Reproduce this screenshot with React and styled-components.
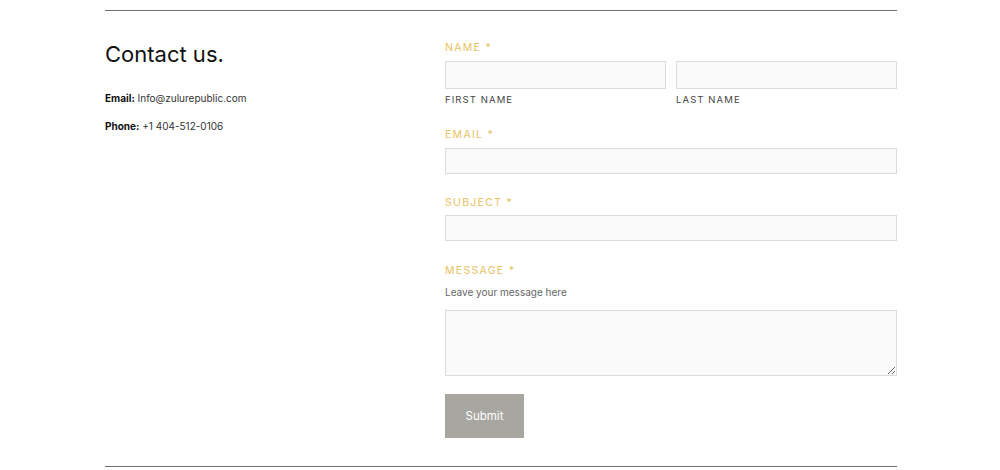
import styled, { createGlobalStyle } from "styled-components";

const GlobalStyle = createGlobalStyle`
  body {
    margin: 0;
    background: #fff;
    font-family: Inter, "Liberation Sans", sans-serif;
  }
`;

const Page = styled.section`
  width: 792px;
  margin: 0 auto 0 105px;
  padding-top: 10px;
`;

const Rule = styled.hr`
  margin: 0;
  border: none;
  border-top: 1px solid #6f6f6f;
`;

const Columns = styled.div`
  display: flex;
`;

const Info = styled.div`
  width: 340px;
  padding-top: 28px;
`;

const Heading = styled.h1`
  margin: 0;
  font-size: 22px;
  font-weight: 400;
  line-height: 30px;
  color: #111;
`;

const InfoLine = styled.p`
  margin: ${(p) => p.$top}px 0 0;
  font-size: 10px;
  line-height: 14px;
  color: #333;

  strong {
    font-weight: 700;
    color: #111;
  }
`;

const Form = styled.form`
  flex: 1;
  display: flex;
  flex-direction: column;
  padding-top: 29px;
`;

const Label = styled.label`
  margin-top: ${(p) => p.$top || 0}px;
  font-size: 10.5px;
  line-height: 16px;
  letter-spacing: 1.3px;
  color: #e6c25e;
  text-transform: uppercase;
`;

const Row = styled.div`
  display: grid;
  grid-template-columns: 1fr 1fr;
  gap: 10px;
  margin-top: 5px;
`;

const Field = styled.div`
  display: flex;
  flex-direction: column;
`;

const Input = styled.input`
  box-sizing: border-box;
  width: 100%;
  height: ${(p) => p.$h || 26}px;
  margin-top: ${(p) => p.$top || 0}px;
  border: 1px solid #dcdcdc;
  background: #fafafa;
  padding: 0 10px;
  font: inherit;
  outline: none;
`;

const SubLabel = styled.span`
  margin-top: 5px;
  font-size: 9.5px;
  line-height: 12px;
  letter-spacing: 1.1px;
  color: #444;
`;

const Helper = styled.p`
  margin: 6px 0 0;
  font-size: 10px;
  line-height: 14px;
  color: #666;
`;

const TextArea = styled.textarea`
  box-sizing: border-box;
  width: 100%;
  height: 66px;
  margin-top: 11px;
  border: 1px solid #dcdcdc;
  background: #fafafa;
  font: inherit;
  display: block;
  outline: none;
`;

const Submit = styled.button`
  width: 79px;
  height: 44px;
  margin-top: 18px;
  border: none;
  background: #a8a6a1;
  color: #fff;
  font-family: inherit;
  font-size: 11.5px;
  cursor: pointer;
`;

const Bottom = styled.div`
  margin-top: 28px;
`;

export default function App() {
  return (
    <>
      <GlobalStyle />
      <Page>
        <Rule />
        <Columns>
          <Info>
            <Heading>Contact us.</Heading>
            <InfoLine $top={22}>
              <strong>Email:</strong> Info@zulurepublic.com
            </InfoLine>
            <InfoLine $top={14}>
              <strong>Phone:</strong> +1 404-512-0106
            </InfoLine>
          </Info>
          <Form onSubmit={(e) => e.preventDefault()}>
            <Label>Name *</Label>
            <Row>
              <Field>
                <Input $h={28} />
                <SubLabel>FIRST NAME</SubLabel>
              </Field>
              <Field>
                <Input $h={28} />
                <SubLabel>LAST NAME</SubLabel>
              </Field>
            </Row>
            <Label $top={21}>Email *</Label>
            <Input $top={5} />
            <Label $top={21}>Subject *</Label>
            <Input $top={4} />
            <Label $top={22}>Message *</Label>
            <Helper>Leave your message here</Helper>
            <TextArea />
            <div>
              <Submit type="submit">Submit</Submit>
            </div>
          </Form>
        </Columns>
        <Bottom>
          <Rule />
        </Bottom>
      </Page>
    </>
  );
}
